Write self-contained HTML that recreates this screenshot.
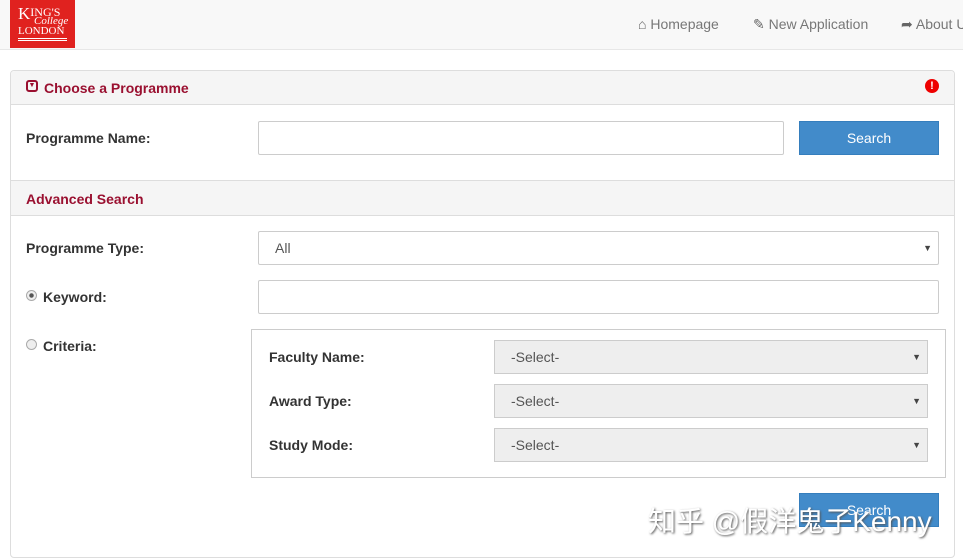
<!DOCTYPE html>
<html><head><meta charset="utf-8"><style>
*{box-sizing:border-box;margin:0;padding:0}
body{width:963px;height:560px;overflow:hidden;background:#fff;font-family:"Liberation Sans",Arial,sans-serif;font-size:14px;color:#333;position:relative}
.abs{position:absolute}
.nav{left:0;top:0;width:963px;height:50px;background:#f8f8f8;border-bottom:1px solid #e7e7e7}
.logo{left:10px;top:0;width:65px;height:48px;background:#e0221f;color:#fff;font-family:"Liberation Serif",serif;line-height:1;overflow:hidden}
.navl{top:16px;color:#777;font-size:14px;white-space:nowrap}
.panel{left:10px;top:70px;width:945px;height:488px;border:1px solid #ddd;border-radius:4px}
.ph{left:11px;width:943px;background:#f5f5f5;border-top:1px solid #ddd;border-bottom:1px solid #ddd;color:#9a1030;font-weight:bold}
.lbl{font-weight:bold;color:#333}
.inp{border:1px solid #ccc;border-radius:2px;background:#fff}
.sel{border:1px solid #ccc;background:#eee;color:#555;padding-left:16px;line-height:32px}
.btn{background:#428bca;border:1px solid #357ebd;color:#fff;text-align:center;line-height:32px}
.car{position:absolute;right:6px;top:0;font-size:9px;color:#444}
.radio{width:11px;height:11px;border-radius:50%;border:1px solid #aaa;background:#eee}
</style></head><body>
<div class="abs nav"></div>
<div class="abs logo"><div class="abs" style="left:8px;top:5px;font-size:17px;white-space:nowrap">K<span style="font-size:12px;position:relative;top:-3px">ING'S</span></div><div class="abs" style="left:24px;top:16px;font-size:11px;font-style:italic">College</div><div class="abs" style="left:8px;top:26px;font-size:11px">LONDON</div><div class="abs" style="left:8px;top:38px;width:49px;height:1px;background:#fff"></div><div class="abs" style="left:8px;top:40px;width:49px;height:1px;background:#fff"></div></div>
<div class="abs navl" style="left:638px"><span style="color:#666">&#8962;</span> Homepage</div>
<div class="abs navl" style="left:753px"><span style="color:#666">&#9998;</span> New Application</div>
<div class="abs navl" style="left:901px"><span style="color:#666">&#10150;</span> About Us</div>
<div class="abs panel"></div>
<div class="abs ph" style="top:71px;height:34px;border-top:none;border-radius:4px 4px 0 0"><span class="abs" style="left:15px;top:9px;width:12px;height:12px;border:2px solid #9a1030;border-radius:3px;font-size:7px;text-align:center;line-height:8px">▼</span><span class="abs" style="left:33px;top:9px">Choose a Programme</span><span class="abs" style="left:914px;top:8px;width:14px;height:14px;border-radius:50%;background:#e00;color:#fff;font-size:11px;text-align:center;line-height:14px">!</span></div>
<div class="abs lbl" style="left:26px;top:130px">Programme Name:</div>
<div class="abs inp" style="left:258px;top:121px;width:526px;height:34px"></div>
<div class="abs btn" style="left:799px;top:121px;width:140px;height:34px">Search</div>
<div class="abs ph" style="top:180px;height:36px"><span class="abs" style="left:15px;top:10px">Advanced Search</span></div>
<div class="abs lbl" style="left:26px;top:240px">Programme Type:</div>
<div class="abs inp" style="left:258px;top:231px;width:681px;height:34px;padding-left:16px;line-height:32px;color:#555">All<span class="car">▼</span></div>
<div class="abs radio" style="left:26px;top:290px;background:radial-gradient(#555 30%,#eee 40%)"></div>
<div class="abs lbl" style="left:43px;top:289px">Keyword:</div>
<div class="abs inp" style="left:258px;top:280px;width:681px;height:34px"></div>
<div class="abs radio" style="left:26px;top:339px"></div>
<div class="abs lbl" style="left:43px;top:338px">Criteria:</div>
<div class="abs" style="left:251px;top:329px;width:695px;height:149px;border:1px solid #ccc"></div>
<div class="abs lbl" style="left:269px;top:349px">Faculty Name:</div>
<div class="abs sel" style="left:494px;top:340px;width:434px;height:34px">-Select-<span class="car">▼</span></div>
<div class="abs lbl" style="left:269px;top:393px">Award Type:</div>
<div class="abs sel" style="left:494px;top:384px;width:434px;height:34px">-Select-<span class="car">▼</span></div>
<div class="abs lbl" style="left:269px;top:437px">Study Mode:</div>
<div class="abs sel" style="left:494px;top:428px;width:434px;height:34px">-Select-<span class="car">▼</span></div>
<div class="abs btn" style="left:799px;top:493px;width:140px;height:34px">Search</div>
<div class="abs" style="left:648px;top:500px;font-size:28px;color:#fff;text-shadow:1px 1px 2px #555;font-family:'Liberation Sans','Noto Sans CJK SC',sans-serif;white-space:nowrap">知乎 @假洋鬼子Kenny</div>
</body></html>
